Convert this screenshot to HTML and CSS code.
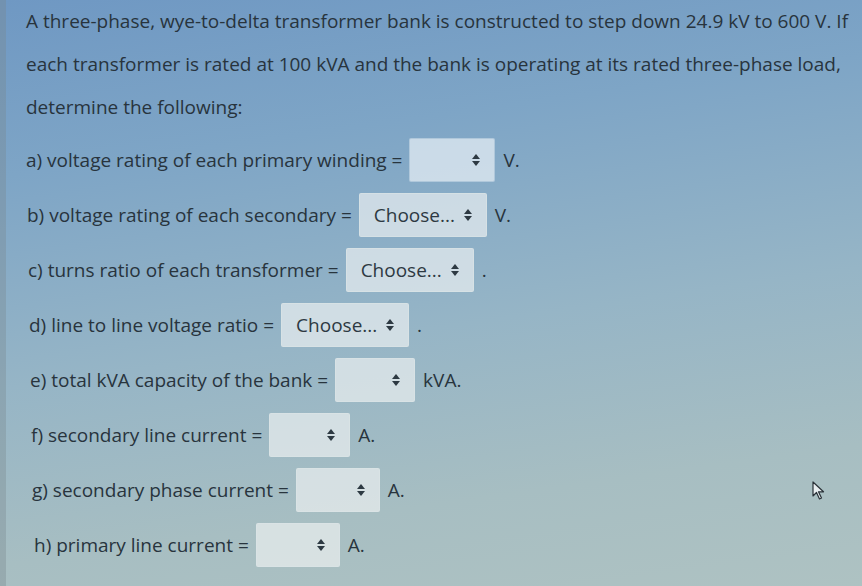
FILE: index.html
```html
<!DOCTYPE html>
<html>
<head>
<meta charset="utf-8">
<link rel="stylesheet" href="styles.css">
</head>
<body>
<div class="page">
  <p class="intro">A three-phase, wye-to-delta transformer bank is constructed to step down 24.9 kV to 600 V. If each transformer is rated at 100 kVA and the bank is operating at its rated three-phase load, determine the following:</p>
  <div class="rows">
    <div class="row r-a"><span class="label">a) voltage rating of each primary winding =</span><span class="sel w-a"><span class="txt"></span><span class="arr"></span></span><span class="unit">V.</span></div>
    <div class="row r-b"><span class="label">b) voltage rating of each secondary =</span><span class="sel w-b"><span class="txt">Choose...</span><span class="arr"></span></span><span class="unit">V.</span></div>
    <div class="row r-c"><span class="label">c) turns ratio of each transformer =</span><span class="sel w-c"><span class="txt">Choose...</span><span class="arr"></span></span><span class="unit">.</span></div>
    <div class="row r-d"><span class="label">d) line to line voltage ratio =</span><span class="sel w-d"><span class="txt">Choose...</span><span class="arr"></span></span><span class="unit">.</span></div>
    <div class="row r-e"><span class="label">e) total kVA capacity of the bank =</span><span class="sel w-e"><span class="txt"></span><span class="arr"></span></span><span class="unit">kVA.</span></div>
    <div class="row r-f"><span class="label">f) secondary line current =</span><span class="sel w-f"><span class="txt"></span><span class="arr"></span></span><span class="unit">A.</span></div>
    <div class="row r-g"><span class="label">g) secondary phase current =</span><span class="sel w-g"><span class="txt"></span><span class="arr"></span></span><span class="unit">A.</span></div>
    <div class="row r-h"><span class="label">h) primary line current =</span><span class="sel w-h"><span class="txt"></span><span class="arr"></span></span><span class="unit">A.</span></div>
  </div>
  <svg class="cursor" width="14" height="20" viewBox="0 0 14 20"><path d="M1 1 L1 15 L4.5 11.5 L7.5 18 L9.5 17 L6.5 10.8 L11.5 10.8 Z" fill="#e8eef0" stroke="#2a3238" stroke-width="1.2" stroke-linejoin="round"/></svg>
</div>
</body>
</html>
```

FILE: styles.css
```css
html, body {
  margin: 0;
  padding: 0;
}
body {
  width: 862px;
  height: 586px;
  overflow: hidden;
  font-family: "Open Sans", "Noto Sans", "DejaVu Sans", sans-serif;
  color: #28343d;
  background: linear-gradient(172deg, #6f98c3 0%, #7ea5c6 25%, #96b5c6 55%, #a7bec2 80%, #aec2c2 100%);
}
.page {
  position: relative;
  height: 586px;
  padding: 0 2px 0 20px;
  box-sizing: border-box;
  border-left: 6px solid rgba(120, 135, 140, 0.35);
}
.intro {
  margin: 0;
  font-size: 19px;
  line-height: 43px;
  letter-spacing: 0;
}
.rows {
  display: flex;
  flex-direction: column;
  margin-top: 3px;
}
.row {
  display: flex;
  align-items: center;
  height: 55px;
  font-size: 19px;
}
.label {
  white-space: nowrap;
}
.sel {
  display: flex;
  align-items: center;
  justify-content: space-between;
  height: 44px;
  box-sizing: border-box;
  margin-left: 7px;
  padding: 0 14px 0 14px;
  background: rgba(240, 243, 243, 0.66);
  border: 1px solid rgba(220, 228, 230, 0.6);
  border-radius: 2px;
}
.r-a .sel {
  background: rgba(234, 241, 246, 0.7);
  border-color: rgba(175, 198, 218, 0.95);
}
.txt {
  color: #2d3942;
}
.arr {
  position: relative;
  width: 8px;
  height: 12px;
}
.arr::before, .arr::after {
  content: "";
  position: absolute;
  left: 0;
  border-left: 4px solid transparent;
  border-right: 4px solid transparent;
}
.arr::before {
  top: 0;
  border-bottom: 5px solid #2d3942;
}
.arr::after {
  bottom: 0;
  border-top: 5px solid #2d3942;
}
.unit {
  margin-left: 8px;
}
.w-a { width: 86px; }
.w-b { width: 128px; }
.w-c { width: 128px; }
.w-d { width: 128px; }
.w-e { width: 80px; }
.w-f { width: 81px; }
.w-g { width: 84px; }
.w-h { width: 84px; }
.r-b { padding-left: 1px; }
.r-c { padding-left: 2px; }
.r-d { padding-left: 3px; }
.r-e { padding-left: 4px; }
.r-f { padding-left: 5px; }
.r-g { padding-left: 6px; }
.r-h { padding-left: 8px; }
.cursor {
  position: absolute;
  left: 806px;
  top: 481px;
}
```
